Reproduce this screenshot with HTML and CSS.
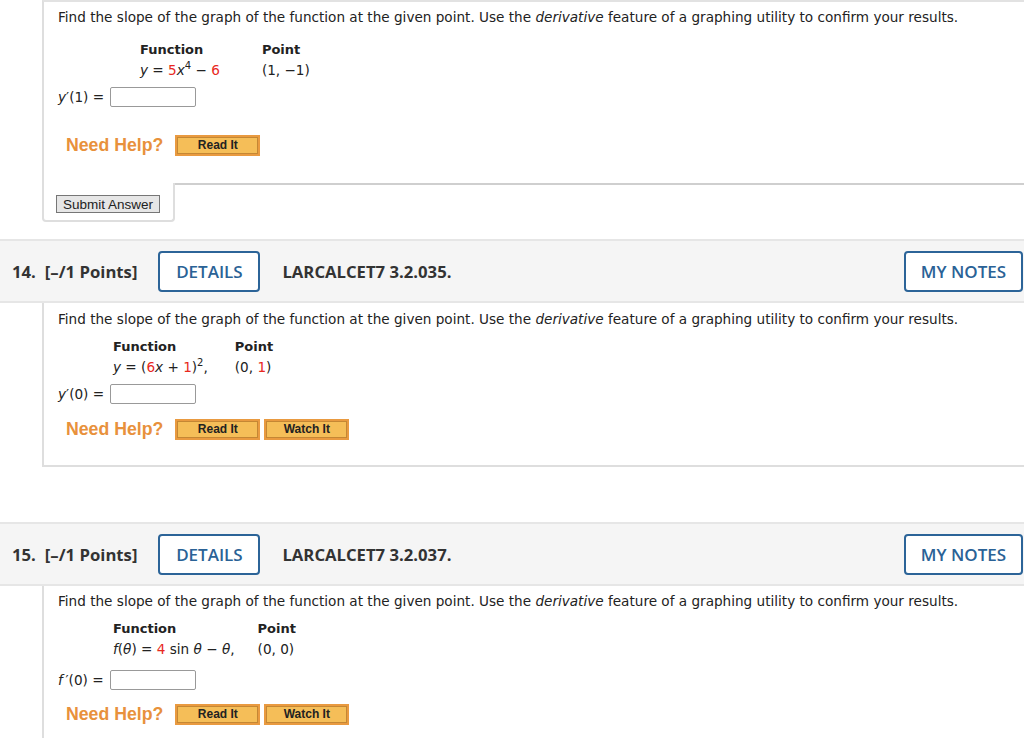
FILE: index.html
```html
<!DOCTYPE html>
<html>
<head>
    <title>Derivative Practice</title>
    <link rel="stylesheet" href="styles.css">
</head>
<body>
    <!-- Question 13 (tail) -->
    <div class="q-body q-first">
        <p class="prompt">Find the slope of the graph of the function at the given point. Use the <i>derivative</i> feature of a graphing utility to confirm your results.</p>
        <table class="fn-table t-first">
            <tr><th class="col-fn">Function</th><th>Point</th></tr>
            <tr>
                <td class="col-fn"><i>y</i> = <span class="red">5</span><i>x</i><sup>4</sup> &minus; <span class="red">6</span></td>
                <td>(1, &minus;1)</td>
            </tr>
        </table>
        <div class="answer a-first"><span><i>y</i>′(1) =</span><span class="blank"></span></div>
        <div class="help h-first">
            <span class="help-label">Need Help?</span>
            <button class="help-btn">Read It</button>
        </div>
    </div>
    <div class="submit-row">
        <div class="submit-tab"><button class="submit-btn">Submit Answer</button></div>
        <div class="submit-rest"></div>
    </div>

    <!-- Question 14 -->
    <div class="q-head head-14">
        <span class="q-num">14.</span>
        <span class="q-points">[–/1 Points]</span>
        <button class="outline-btn">DETAILS</button>
        <span class="q-code">LARCALCET7 3.2.035.</span>
        <button class="outline-btn notes-btn">MY NOTES</button>
    </div>
    <div class="q-body q-boxed">
        <p class="prompt">Find the slope of the graph of the function at the given point. Use the <i>derivative</i> feature of a graphing utility to confirm your results.</p>
        <table class="fn-table t-14">
            <tr><th class="col-fn">Function</th><th>Point</th></tr>
            <tr>
                <td class="col-fn"><i>y</i> = (<span class="red">6</span><i>x</i> + <span class="red">1</span>)<sup>2</sup>,</td>
                <td>(0, <span class="red">1</span>)</td>
            </tr>
        </table>
        <div class="answer"><span><i>y</i>′(0) =</span><span class="blank"></span></div>
        <div class="help">
            <span class="help-label">Need Help?</span>
            <button class="help-btn">Read It</button>
            <button class="help-btn">Watch It</button>
        </div>
    </div>

    <!-- Question 15 -->
    <div class="q-head head-15">
        <span class="q-num">15.</span>
        <span class="q-points">[–/1 Points]</span>
        <button class="outline-btn">DETAILS</button>
        <span class="q-code">LARCALCET7 3.2.037.</span>
        <button class="outline-btn notes-btn">MY NOTES</button>
    </div>
    <div class="q-body q-last">
        <p class="prompt">Find the slope of the graph of the function at the given point. Use the <i>derivative</i> feature of a graphing utility to confirm your results.</p>
        <table class="fn-table t-15">
            <tr><th class="col-fn">Function</th><th>Point</th></tr>
            <tr class="row-tall">
                <td class="col-fn"><i>f</i>(<i>θ</i>) = <span class="red">4</span> sin <i>θ</i> &minus; <i>θ</i>,</td>
                <td>(0, 0)</td>
            </tr>
        </table>
        <div class="answer a-last"><span><i>f</i>&thinsp;′(0) =</span><span class="blank"></span></div>
        <div class="help h-last">
            <span class="help-label">Need Help?</span>
            <button class="help-btn">Read It</button>
            <button class="help-btn">Watch It</button>
        </div>
    </div>
</body>
</html>
```

FILE: styles.css
```css
body {
    margin: 0;
    background: white;
    font-family: 'DejaVu Sans', Verdana, sans-serif;
    font-size: 13.6px;
    color: #222;
    overflow: hidden;
}
.q-body {
    margin-left: 42px;
    border-left: 2px solid #dedede;
    padding: 6px 0 24px 14px;
}
.q-first {
    border-top: 2px solid #e2e2e2;
    padding-top: 5px;
    padding-bottom: 26px;
}
.q-boxed {
    border-bottom: 2px solid #dedede;
}
.q-last {
    padding-top: 5px;
}
.prompt {
    margin: 0;
    line-height: 20px;
    white-space: nowrap;
}
.fn-table {
    border-spacing: 0;
    margin: 7px 0 0 55px;
}
.t-first {
    margin: 12px 0 0 82px;
}
.fn-table th {
    text-align: left;
    font-weight: bold;
    height: 20px;
    padding: 0;
    font-size: 13px;
}
.fn-table td {
    height: 21px;
    padding: 0;
    white-space: nowrap;
}
.fn-table .row-tall td {
    height: 22px;
}
.fn-table .col-fn {
    padding-right: 21px;
}
.t-first .col-fn {
    padding-right: 42px;
}
.t-14 .col-fn {
    padding-right: 27px;
}
.t-15 .col-fn {
    padding-right: 23px;
}
sup {
    font-size: 10px;
    line-height: 0;
}
.red {
    color: #e8281e;
}
.answer {
    display: flex;
    align-items: center;
    gap: 6px;
    margin-top: 7px;
    height: 20px;
}
.a-last {
    margin-top: 10px;
}
.blank {
    display: inline-block;
    width: 84px;
    height: 18px;
    border: 1px solid #999;
    border-radius: 2px;
    background: white;
}
.help {
    display: flex;
    align-items: center;
    gap: 4px;
    height: 24px;
    margin: 13px 0 0 8px;
}
.h-first {
    margin-top: 26px;
}
.h-last {
    margin-top: 12px;
}
.help-label {
    font-family: 'Liberation Sans', Arial, sans-serif;
    font-weight: bold;
    font-size: 17.7px;
    color: #e8913c;
    margin-right: 8px;
}
.help-btn {
    font-family: 'Liberation Sans', Arial, sans-serif;
    font-weight: bold;
    font-size: 12px;
    color: #222;
    width: 85px;
    height: 21px;
    padding: 0;
    background: #f5be58;
    border: 2px solid #e99a40;
    box-shadow: inset 0 0 0 1px #c58734;
}
.submit-row {
    display: flex;
    margin-left: 42px;
}
.submit-tab {
    border-left: 2px solid #dedede;
    border-right: 2px solid #dedede;
    border-bottom: 2px solid #dedede;
    border-radius: 0 0 4px 4px;
    padding: 12px 13px 7px 12px;
}
.submit-rest {
    flex: 1;
    border-top: 2px solid #cfcfcf;
}
.submit-btn {
    font-family: 'Liberation Sans', Arial, sans-serif;
    font-size: 13.5px;
    color: #222;
    background: #e6e6e6;
    border: 1px solid #767676;
    height: 18px;
    width: 104px;
    padding: 0;
    display: block;
}
.q-head {
    display: flex;
    align-items: center;
    height: 60px;
    background: #f5f5f5;
    border-top: 2px solid #e6e6e6;
    border-bottom: 2px solid #e6e6e6;
    padding-left: 12px;
    font-family: 'Open Sans', sans-serif;
    font-size: 16.7px;
    font-weight: bold;
    color: #333;
}
.head-14 {
    margin-top: 17px;
}
.head-15 {
    margin-top: 55px;
}
.q-num {
    margin-right: 9px;
}
.q-points {
    margin-right: 21px;
}
.q-code {
    margin-left: 22px;
}
.outline-btn {
    font-family: 'Open Sans', sans-serif;
    font-size: 17px;
    font-weight: 600;
    color: #2a6296;
    background: white;
    border: 2px solid #2c6498;
    border-radius: 4px;
    height: 41px;
    width: 102px;
    padding: 0;
}
.notes-btn {
    margin-left: auto;
    margin-right: 1px;
    width: 119px;
}
```
